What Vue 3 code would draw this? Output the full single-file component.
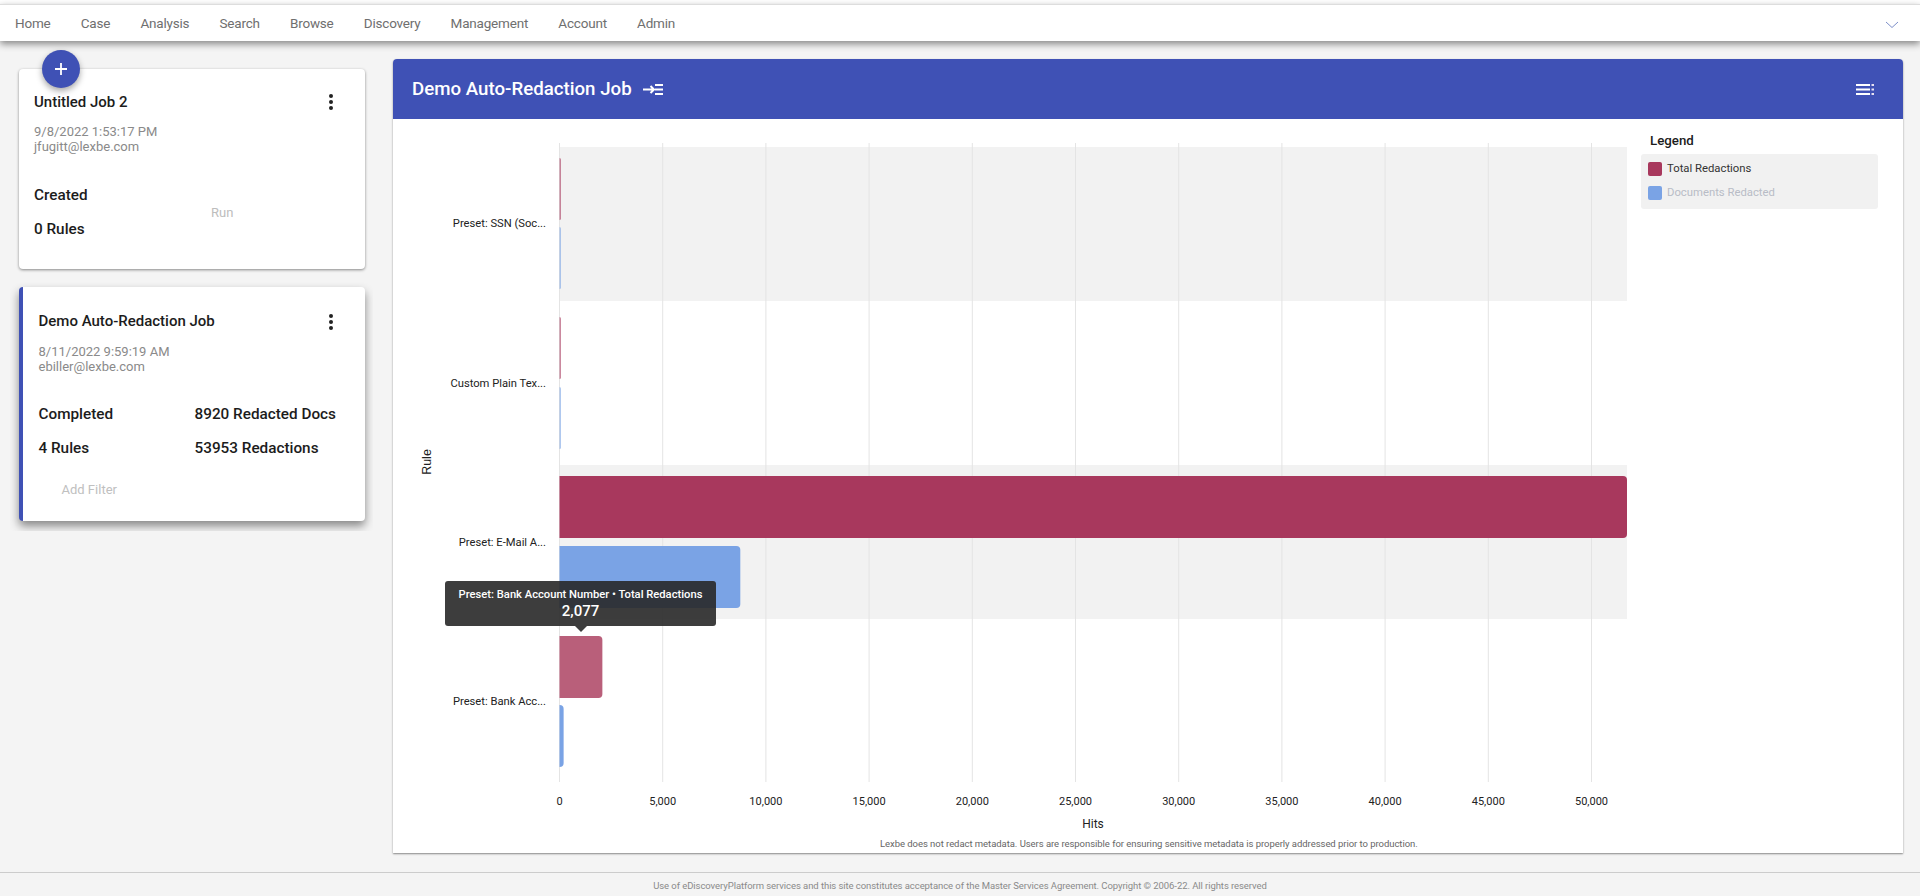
<script setup>
import { ref } from 'vue'

const navItems = ref(['Home', 'Case', 'Analysis', 'Search', 'Browse', 'Discovery', 'Management', 'Account', 'Admin'])

// chart geometry: px per hit comes from the 5,000 tick spacing
const X0 = 559.5
const PX_PER_HIT = 103.2 / 5000
const ticks = [0, 5000, 10000, 15000, 20000, 25000, 30000, 35000, 40000, 45000, 50000]

const bands = [
  { y: 147, h: 154 },
  { y: 465, h: 154 }
]

const rows = [
  { label: 'Preset: SSN (Soc...', labelY: 223, total: 4, docs: 4, totalY: 158, docsY: 227, fade: true },
  { label: 'Custom Plain Tex...', labelY: 383, total: 4, docs: 4, totalY: 317, docsY: 387, fade: true },
  { label: 'Preset: E-Mail A...', labelY: 542, total: 53953, docs: 8760, totalY: 476, docsY: 546 },
  { label: 'Preset: Bank Acc...', labelY: 701, total: 2077, docs: 200, totalY: 636, docsY: 705, hover: true }
]

const barWidth = (hits) => Math.min(Math.max(hits * PX_PER_HIT, 1.5), 1067.5)
const tickX = (t) => X0 + t * PX_PER_HIT
const fmt = (n) => n.toLocaleString('en-US')

// flat left edge, rounded right end
const barPath = (y, hits) => {
  const w = barWidth(hits)
  const r = Math.min(4, w)
  const h = 62
  return `M${X0} ${y}h${w - r}a${r} ${r} 0 0 1 ${r} ${r}v${h - 2 * r}a${r} ${r} 0 0 1 -${r} ${r}h-${w - r}z`
}
</script>

<template>
  <div class="page">
    <nav class="topnav">
      <a v-for="item in navItems" :key="item" class="topnav__item">{{ item }}</a>
      <svg class="topnav__chevron" width="14" height="8" viewBox="0 0 14 8">
        <path d="M1 1l6 5.5L13 1" fill="none" stroke="#7d8fc9" stroke-width="1" />
      </svg>
    </nav>

    <div class="content">
      <aside class="sidebar">
        <button class="fab">
          <svg width="16" height="16" viewBox="0 0 16 16">
            <path d="M8 2v12M2 8h12" stroke="#fff" stroke-width="1.8" />
          </svg>
        </button>
        <div class="job-list">
          <div class="job-card">
            <div class="job-card__head">
              <span class="job-card__title">Untitled Job 2</span>
              <span class="dots"><i></i><i></i><i></i></span>
            </div>
            <div class="job-card__meta">9/8/2022 1:53:17 PM<br />jfugitt@lexbe.com</div>
            <div class="job-card__stats">
              <div class="job-card__left">
                <b>Created</b>
                <b>0 Rules</b>
              </div>
              <span class="job-card__run">Run</span>
            </div>
          </div>

          <div class="job-card job-card--active">
            <div class="job-card__head">
              <span class="job-card__title">Demo Auto-Redaction Job</span>
              <span class="dots"><i></i><i></i><i></i></span>
            </div>
            <div class="job-card__meta">8/11/2022 9:59:19 AM<br />ebiller@lexbe.com</div>
            <div class="job-card__grid">
              <b>Completed</b>
              <b>8920 Redacted Docs</b>
              <b>4 Rules</b>
              <b>53953 Redactions</b>
            </div>
            <span class="job-card__filter">Add Filter</span>
          </div>
        </div>
      </aside>

      <main class="panel">
        <header class="panel__head">
          <h1 class="panel__title">Demo Auto-Redaction Job</h1>
          <svg class="panel__icon" width="20" height="11" viewBox="0 0 20 11">
            <path d="M0 5.5h10M7.5 2l3.5 3.5L7.5 9" fill="none" stroke="#fff" stroke-width="2" />
            <path d="M12 1h8M12 5.5h8M12 10h8" stroke="#fff" stroke-width="1.8" />
          </svg>
          <svg class="panel__menu" width="18" height="11" viewBox="0 0 18 11">
            <path d="M0 1h14M0 5.5h14M0 10h14" stroke="#fff" stroke-width="2" />
            <path d="M15.5 1h2.5M15.5 5.5h2.5M15.5 10h2.5" stroke="#e8e2f2" stroke-width="2" />
          </svg>
        </header>

        <div class="panel__body">
          <!-- viewBox uses page coordinates so the numbers read straight off the screenshot -->
          <svg class="chart" width="1510" height="734" viewBox="393 119 1510 734">
            <rect v-for="b in bands" :key="b.y" x="559.5" :y="b.y" width="1067.5" :height="b.h" fill="#f2f2f2" />
            <line v-for="t in ticks" :key="t" :x1="tickX(t)" :x2="tickX(t)" y1="143" y2="782" stroke="#e4e4e4" stroke-width="1" />

            <template v-for="row in rows" :key="row.label">
              <path :d="barPath(row.totalY, row.total)" :fill="row.hover ? '#b95f7a' : '#a8385d'" :opacity="row.fade ? 0.6 : 1" />
              <path :d="barPath(row.docsY, row.docs)" fill="#7aa3e5" :opacity="row.fade ? 0.6 : 1" />
              <text class="tick tick--label" x="546" :y="row.labelY + 4" text-anchor="end">{{ row.label }}</text>
            </template>

            <text v-for="t in ticks" :key="'x' + t" class="tick" :x="tickX(t)" y="805" text-anchor="middle">{{ fmt(t) }}</text>
            <text class="axis" x="1093" y="828" text-anchor="middle">Hits</text>
            <text class="axis axis--rule" transform="translate(431 462) rotate(-90)" text-anchor="middle">Rule</text>
          </svg>

          <div class="legend">
            <div class="legend__title">Legend</div>
            <ul class="legend__box">
              <li class="legend__item"><i class="legend__swatch legend__swatch--red"></i>Total Redactions</li>
              <li class="legend__item legend__item--off"><i class="legend__swatch legend__swatch--blue"></i>Documents Redacted</li>
            </ul>
          </div>

          <div class="tooltip">
            <div class="tooltip__label">Preset: Bank Account Number • Total Redactions</div>
            <div class="tooltip__value">2,077</div>
          </div>

          <p class="panel__note">Lexbe does not redact metadata. Users are responsible for ensuring sensitive metadata is properly addressed prior to production.</p>
        </div>
      </main>
    </div>

    <footer class="footer">Use of eDiscoveryPlatform services and this site constitutes acceptance of the Master Services Agreement. Copyright © 2006-22. All rights reserved</footer>
  </div>
</template>

<style>
html, body { margin: 0; background: #f4f4f4; }
</style>

<style scoped>
.page {
  height: 896px;
  display: flex;
  flex-direction: column;
  overflow: hidden;
  font-family: Roboto, "Liberation Sans", sans-serif;
  background: #f4f4f4;
  color: #1c1c1c;
}

/* top nav */
.topnav {
  position: relative;
  z-index: 2;
  display: flex;
  align-items: center;
  height: 37px;
  box-sizing: border-box;
  padding: 0 0 0 15px;
  gap: 30.2px;
  background: #fff;
  border-top: 1px solid #ddd;
  margin-top: 4px;
  box-shadow: 0 3px 7px rgba(0, 0, 0, 0.45);
  font-size: 13.5px;
  letter-spacing: -0.2px;
  color: #6f6f6f;
}
.page::before {
  content: "";
  position: absolute;
  top: 0;
  left: 0;
  right: 0;
  height: 4px;
  background: #fff;
}
.topnav__chevron {
  margin-left: auto;
  margin-right: 21px;
  margin-top: 4px;
}

.content {
  flex: 1;
  display: flex;
  min-height: 0;
}

/* left column */
.sidebar {
  position: relative;
  width: 393px;
  flex: none;
}
.fab {
  position: absolute;
  z-index: 1;
  left: 42px;
  top: 9px;
  width: 38px;
  height: 38px;
  border: 0;
  padding: 0;
  border-radius: 50%;
  background: #3f51b5;
  box-shadow: 0 3px 6px rgba(0, 0, 0, 0.35);
  display: flex;
  align-items: center;
  justify-content: center;
}
.job-list {
  margin: 20px 20px 0 10px;
  padding: 8px 8px 10px 9px;
  overflow: hidden;
  display: flex;
  flex-direction: column;
  gap: 18px;
}
.job-card {
  height: 200px;
  box-sizing: border-box;
  padding: 23px 15px 0;
  background: #fff;
  border-radius: 4px;
  box-shadow: 0 1px 3px rgba(0, 0, 0, 0.45);
}
.job-card--active {
  height: 234px;
  padding: 25px 15px 0 15.5px;
  border-left: 4px solid #3f51b5;
  box-shadow: 0 5px 10px rgba(0, 0, 0, 0.45);
}
.job-card--active .job-card__title {
  margin-top: -2px;
}
.job-card__head {
  display: flex;
  justify-content: space-between;
  align-items: center;
  height: 20px;
}
.job-card__title {
  font-size: 15px;
  font-weight: 500;
}
.dots {
  display: flex;
  flex-direction: column;
  gap: 2px;
  margin-right: 17px;
}
.dots i {
  width: 4px;
  height: 4px;
  border-radius: 50%;
  background: #222;
}
.job-card__meta {
  margin-top: 12px;
  font-size: 13px;
  line-height: 15px;
  color: #8a8a8a;
}
.job-card__stats {
  display: flex;
  margin-top: 32px;
}
.job-card__left {
  display: flex;
  flex-direction: column;
  gap: 16px;
  width: 177px;
}
.job-card b {
  font-size: 15.3px;
  font-weight: 500;
  line-height: 18px;
}
.job-card__run {
  align-self: center;
  font-size: 13px;
  color: #bdbdbd;
}
.job-card__grid {
  display: grid;
  grid-template-columns: 156px 1fr;
  row-gap: 16px;
  margin-top: 31px;
}
.job-card__filter {
  display: block;
  margin: 25px 0 0 23px;
  font-size: 13px;
  color: #c0c0c0;
}

/* right panel */
.panel {
  width: 1510px;
  height: 794px;
  margin-top: 18px;
  background: #fff;
  border-radius: 4px 4px 0 0;
  box-shadow: 0 1px 2px rgba(0, 0, 0, 0.45);
}
.panel__head {
  display: flex;
  align-items: center;
  height: 60px;
  padding: 0 29px 0 19px;
  background: #3f51b5;
  border-radius: 4px 4px 0 0;
  color: #fff;
}
.panel__title {
  margin: 0;
  font-size: 18.7px;
  font-weight: 500;
}
.panel__icon {
  margin-left: 11px;
}
.panel__menu {
  margin-left: auto;
}
.panel__body {
  position: relative;
  height: 734px;
}
.chart {
  display: block;
}
.tick {
  font-size: 11px;
  fill: #222;
  font-family: Roboto, sans-serif;
}
.tick--label {
  font-size: 11.2px;
}
.axis {
  font-size: 12px;
  fill: #222;
  font-family: Roboto, sans-serif;
}
.axis--rule {
  font-family: "Liberation Sans", sans-serif;
  font-size: 12.5px;
}

.legend {
  position: absolute;
  left: 1248px;
  top: 14px;
  width: 237px;
}
.legend__title {
  padding-left: 9px;
  font-size: 13.3px;
  font-weight: 500;
  line-height: 16px;
}
.legend__box {
  list-style: none;
  margin: 5px 0 0;
  padding: 8px 7px 7px;
  height: 55px;
  box-sizing: border-box;
  background: #f1f1f1;
  border-radius: 3px;
  display: flex;
  flex-direction: column;
  gap: 10px;
}
.legend__item {
  display: flex;
  align-items: center;
  gap: 5px;
  font-size: 11.3px;
  line-height: 14px;
  color: #333;
}
.legend__item--off {
  color: #b8bcc6;
}
.legend__swatch {
  width: 14px;
  height: 14px;
  border-radius: 2px;
}
.legend__swatch--red { background: #a8385d; }
.legend__swatch--blue { background: #7aa3e5; }

.tooltip {
  position: absolute;
  left: 52px;
  top: 462px;
  width: 271px;
  height: 45px;
  box-sizing: border-box;
  padding-top: 7px;
  background: rgba(40, 40, 40, 0.9);
  border-radius: 3px;
  color: #fff;
  text-align: center;
}
.tooltip::after {
  content: "";
  position: absolute;
  left: 130px;
  top: 45px;
  border: 6px solid transparent;
  border-top-color: rgba(40, 40, 40, 0.9);
  border-bottom: 0;
}
.tooltip__label {
  font-size: 11.2px;
  font-weight: 500;
  line-height: 14px;
}
.tooltip__value {
  font-size: 15px;
  font-weight: 500;
  line-height: 18px;
}
.panel__note {
  position: absolute;
  left: 487px;
  top: 719px;
  margin: 0;
  font-size: 9.5px;
  letter-spacing: -0.05px;
  line-height: 12px;
  color: #666;
  white-space: nowrap;
}

.footer {
  height: 24px;
  border-top: 1px solid #ccc;
  box-sizing: border-box;
  text-align: center;
  font-size: 9.5px;
  letter-spacing: -0.07px;
  line-height: 25px;
  color: #8a8a8a;
  margin-top: auto;
}
</style>
